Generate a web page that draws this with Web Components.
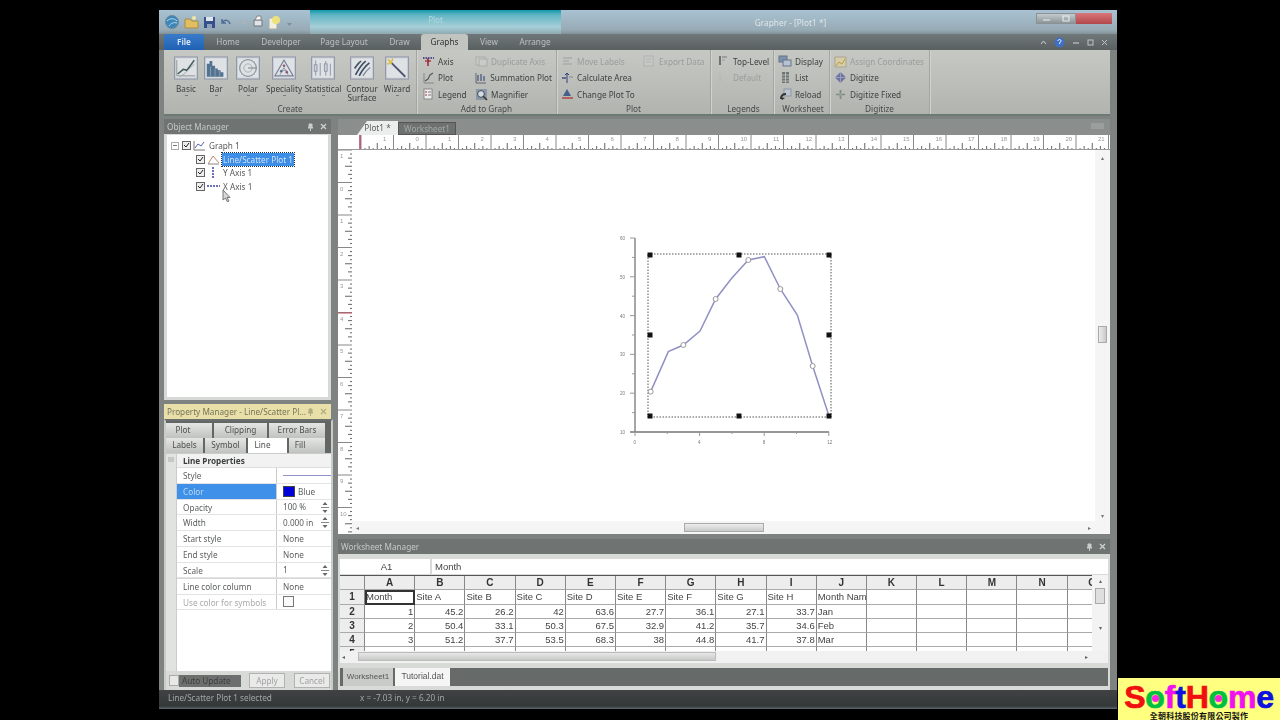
<!DOCTYPE html>
<html>
<head>
<meta charset="utf-8">
<title>Grapher</title>
<style>
html, body { margin: 0; height: 720px; overflow: hidden; background: #000; }
body { position: relative; font: 9px "Noto Sans", "Liberation Sans", sans-serif; }
</style>
</head>
<body>
<gr-window>
	<gr-titlebar slot="title"></gr-titlebar>
	<gr-ribbon slot="ribbon"></gr-ribbon>
	<gr-panel slot="tree" heading="Object Manager"><gr-tree></gr-tree></gr-panel>
	<gr-panel slot="props" heading="Property Manager - Line/Scatter Pl..." tone="yellow"><gr-props></gr-props></gr-panel>
	<gr-plot slot="plot"></gr-plot>
	<gr-panel slot="sheet" heading="Worksheet Manager"><gr-sheet></gr-sheet></gr-panel>
	<gr-status slot="status"></gr-status>
</gr-window>
<gr-logo></gr-logo>

<script>
const define = (name, markup, init) => {
	const tpl = document.createElement('template')
	tpl.innerHTML = markup
	customElements.define(name, class extends HTMLElement {
		constructor() {
			super()
			this.attachShadow({mode: 'open'}).append(tpl.content.cloneNode(true))
		}
		connectedCallback() {
			if (init) init(this, this.shadowRoot)
		}
	})
}

const svg = (w, h, body) => `<svg width="${w}" height="${h}" viewBox="0 0 ${w} ${h}" fill="none">${body}</svg>`

const bigFrame = inner => `<svg width="24" height="24" viewBox="0 0 26 25" fill="none"><rect x=".5" y=".5" width="25" height="24" fill="#c4c9d2" stroke="#8f95a6"/><rect x="2" y="2" width="22" height="21" fill="#dfe2e4"/>${inner}</svg>`
const bigIcons = {
	basic: bigFrame('<path d="M3 21h20M3 4v17" stroke="#8c908e"/><path d="M4 19l6-5 4 1 8-11" stroke="#3f5a58" stroke-width="1.6"/><path d="M6 22l5-3 5-5 6-6" stroke="#9aa7b4"/>'),
	bar: bigFrame('<path d="M3 22V8h3v-3h3v5h3v3h3v2h3v2h3v5z" fill="#52728f"/><path d="M7 22V11M12 22V13M17 22v-6" stroke="#88a0b4"/>'),
	polar: bigFrame('<circle cx="13" cy="12.5" r="9" stroke="#8e9aa0" stroke-width="1.4"/><circle cx="13" cy="12.5" r="4.5" stroke="#a4adb1"/><path d="M13 12.5h9" stroke="#6f7c80"/>'),
	speciality: bigFrame('<path d="M13 4L23 21H3z" stroke="#7a7f95" stroke-width="1.2"/><path d="M8 21l5-9 5 9M10 15h6" stroke="#9498ac"/><circle cx="13" cy="10" r="1.4" fill="#8a5a72"/><circle cx="10" cy="16" r="1.4" fill="#5a6a8a"/><circle cx="16" cy="17" r="1.4" fill="#8a5a72"/>'),
	statistical: bigFrame('<path d="M5 4v17M10 7v14M16 5v16M21 8v13" stroke="#9ea3b6" stroke-width="1.3"/><rect x="3.5" y="9" width="3" height="7" fill="#ccd0d8" stroke="#8f94a6"/><rect x="14.5" y="8" width="3" height="8" fill="#ccd0d8" stroke="#8f94a6"/>'),
	contour: bigFrame('<path d="M6 20C9 14 12 9 17 5M10 21c3-6 6-10 11-14M5 13c2-3 4-6 7-8" stroke="#3f4f63" stroke-width="1.8"/><path d="M14 21c2-3 5-7 8-9" stroke="#7b86a0" stroke-width="1.4"/>'),
	wizard: bigFrame('<path d="M7 7l15 15" stroke="#4d5670" stroke-width="2"/><path d="M3 3l2 2M8 2v3M2 8h3" stroke="#d8b53c" stroke-width="1.5"/><circle cx="6" cy="6" r="2" fill="#e2c040"/>')
}

const smallIcons = {
	axis: svg(13, 12, '<path d="M1 3h11" stroke="#2a2f80" stroke-width="1.4" stroke-dasharray="1.5 1"/><path d="M6 3v8" stroke="#a01f2f" stroke-width="1.5"/><path d="M3 6h6" stroke="#a01f2f" stroke-width="1.2"/>'),
	plot: svg(13, 12, '<path d="M2 1v10h10" stroke="#888"/><path d="M3 9l3-2 2-4 3-2" stroke="#555" stroke-width="1.1"/>'),
	legend: svg(13, 12, '<rect x="2" y="1" width="8" height="10" fill="#eee" stroke="#888"/><path d="M3 4h2M3 7h2" stroke="#a03333"/><path d="M6 4h3M6 7h3" stroke="#777"/>'),
	dup: svg(13, 12, '<rect x="1" y="2" width="9" height="8" fill="#c8cbc6" stroke="#a9aca8"/><rect x="4" y="4" width="8" height="7" fill="#c8cbc6" stroke="#a9aca8"/>'),
	sum: svg(13, 12, '<path d="M2 1v10h10" stroke="#667"/><path d="M4 9V3M7 9V2M10 9V4" stroke="#6a7590" stroke-width="1.8"/>'),
	mag: svg(13, 13, '<rect x="1" y="1" width="11" height="11" fill="#8a97a8"/><circle cx="6" cy="6" r="3.4" fill="#d6dade" stroke="#3e4a5a"/><path d="M8 8l4 4" stroke="#3e3628" stroke-width="1.6"/>'),
	move: svg(13, 12, '<path d="M2 3h9M2 6h6M2 9h9" stroke="#a9aca8" stroke-width="1.6"/>'),
	area: svg(13, 12, '<path d="M6 1v10" stroke="#2e3f80"/><path d="M1 6h4" stroke="#2e3f80" stroke-width="1.3"/><path d="M8 5h4" stroke="#8a8d8a"/><path d="M4 3l2-2 2 2" stroke="#2e3f80"/>'),
	change: svg(13, 12, '<path d="M6 1L2 8h8z" fill="#43608f"/><path d="M1 10h11" stroke="#b03c3c" stroke-width="1.4"/>'),
	export: svg(13, 12, '<rect x="1" y="1" width="9" height="10" fill="#c6c9c4" stroke="#aeb1ad"/><path d="M3 4h5M3 7h5" stroke="#aeb1ad"/>'),
	top: svg(13, 12, '<path d="M3 1v9" stroke="#444" stroke-width="1.3"/><path d="M5 2h5" stroke="#777"/><path d="M5 5h3" stroke="#999"/>'),
	def: svg(13, 12, '<path d="M3 2v8" stroke="#b4b7b3" stroke-width="1.3"/>'),
	display: svg(14, 12, '<rect x="1" y="1" width="8" height="6" fill="#7d93ad" stroke="#66758a"/><rect x="5" y="5" width="8" height="6" fill="#b5c2cf" stroke="#66758a"/>'),
	list: svg(13, 13, '<rect x="3" y="1" width="7" height="11" fill="#6f7674"/><path d="M3 4h7M3 7h7M3 10h7M6.500 1v11" stroke="#cfd2cf" stroke-width=".7"/>'),
	reload: svg(13, 13, '<rect x="5" y="1" width="7" height="7" fill="#bac3cf" stroke="#8d97a6"/><path d="M2 11c0-3 2-5 5-5" stroke="#333" stroke-width="1.8"/><path d="M1 9l2 3 3-2" fill="#333"/>'),
	assign: svg(13, 13, '<rect x="1" y="2" width="11" height="10" fill="#d4cda8" stroke="#aaa68c"/><path d="M2 11l3-4 3 2 3-5" stroke="#c09a3c"/>'),
	digitize: svg(13, 13, '<path d="M6.500 1l5.500 5.500-5.500 5.500L1 6.500z" fill="#6f739f"/><path d="M6.500 1v11M1 6.500h11" stroke="#a5a8c4" stroke-width=".8"/>'),
	fixed: svg(13, 13, '<path d="M6.500 2v9M2 6.500h9" stroke="#7f8a84" stroke-width="1.7"/><circle cx="6.500" cy="6.500" r="1.600" fill="#97a097"/>')
}

define('gr-window', `<style>
:host {
	display: grid;
	position: absolute;
	left: 159px;
	top: 10px;
	width: 958px;
	height: 699px;
	grid-template-columns: 5px 167px 7px 772px 7px;
	grid-template-rows: 40px 66px 3px 15px 266px 4px 286px 19px;
	background: #7e8281;
	filter: blur(.6px);
	color: #333;
}
::slotted([slot=title]) { grid-area: 1 / 1 / 2 / 6; }
::slotted([slot=ribbon]) { grid-area: 2 / 2 / 3 / 5; }
::slotted([slot=tree]) { grid-area: 4 / 2 / 6 / 3; }
::slotted([slot=props]) { grid-area: 7 / 2 / 8 / 3; }
#right {
	grid-area: 4 / 4 / 8 / 5;
	display: grid;
	grid-template-rows: 415px 5px 151px;
}
::slotted([slot=status]) { grid-area: 8 / 1 / 9 / 6; }
</style>
<slot name="title"></slot>
<slot name="ribbon"></slot>
<slot name="tree"></slot>
<slot name="props"></slot>
<div id="right"><slot name="plot"></slot><span></span><slot name="sheet"></slot></div>
<slot name="status"></slot>`)

define('gr-titlebar', `<style>
:host {
	display: grid;
	grid-template-rows: 24px 16px;
	background: linear-gradient(#a9c2d2, #97abb5 50%, #6a7375 72%, #5c6162);
	color: #d8dcdc;
	position: relative;
	overflow: hidden;
}
#top {
	display: flex;
	align-items: center;
	padding: 0 5px 0 5px;
}
#qat { display: flex; align-items: center; gap: 4px; width: 146px; }
#glare {
	width: 251px;
	height: 100%;
	box-sizing: border-box;
	text-align: center;
	line-height: 20px;
	font-size: 8px;
	color: #b9d8df;
	background: linear-gradient(#0f98ab, #5fb5c4 20%, #a6cfd8 70%, #8fa9b0);
}
#name {
	flex: 1;
	text-align: center;
	padding-right: 16px;
	font-size: 8.300px;
	color: #dfe6e8;
}
#winbtn { display: flex; height: 11px; position: relative; top: -4px; }
#minmax { width: 40px; background: linear-gradient(#c3cbd0, #8d9598); border: 1px solid #8b9296; box-sizing: border-box; display: flex; align-items: center; justify-content: space-around; }
#close { width: 36px; background: linear-gradient(#d8777a, #b2474b); }
#tabs {
	display: grid;
	grid-template-columns: 5px 40px 48px 58px 68px 43px 47px 42px 50px 1fr;
	align-items: stretch;
	font-size: 8.200px;
	text-align: center;
	line-height: 15px;
	background: linear-gradient(#70787a, #5a5f60);
}
#tabs span { color: #bcc0bf; }
#tabs .file { background: linear-gradient(#3a7bc9, #1f62b5); color: #dce8f5; border-radius: 3px 3px 0 0; font-weight: 600; }
#tabs .on { background: #c2c4bf; color: #2f3331; border-radius: 3px 3px 0 0; }
#help { display: flex; align-items: center; justify-content: flex-end; gap: 7px; padding-right: 9px; }
</style>
<div id="top">
	<div id="qat">
		<svg width="16" height="16" viewBox="0 0 16 16"><circle cx="8" cy="8" r="6.500" fill="#3e86b8" stroke="#6a8aa0"/><path d="M3 7c3-3 7-3 10 0M5 12c2-3 5-4 8-3" stroke="#b4dcee" fill="none"/></svg>
		<svg width="15" height="14" viewBox="0 0 15 14"><path d="M1 4h5l2 2h6v7H1z" fill="#e2be60" stroke="#a88d4a"/><circle cx="10" cy="3" r="2" fill="#f3e7a6"/></svg>
		<svg width="13" height="13" viewBox="0 0 13 13"><rect x="1" y="1" width="11" height="11" fill="#35508a"/><rect x="3" y="1" width="7" height="4" fill="#dfe5ee"/><rect x="4" y="8" width="5" height="4" fill="#8fa0bc"/></svg>
		<svg width="12" height="12" viewBox="0 0 12 12"><path d="M3 6c2-3 6-2 7 2M2 3v4h4" stroke="#4e6e96" stroke-width="1.500" fill="none"/></svg>
		<svg width="12" height="12" viewBox="0 0 12 12"><path d="M9 6C7 3 3 4 2 8M10 3v4H6" stroke="#a8b4bc" stroke-width="1.300" fill="none"/></svg>
		<svg width="12" height="14" viewBox="0 0 12 14"><path d="M2 5h8v6H2z" fill="#e1e4e6" stroke="#6f7478"/><path d="M3 5l2-4h4v4z" fill="#f5f5f5" stroke="#888"/></svg>
		<svg width="14" height="15" viewBox="0 0 14 15"><rect x="1" y="3" width="8" height="11" fill="#f0efe0" stroke="#aaa"/><circle cx="8" cy="5" r="4" fill="#ece27c"/></svg>
		<svg width="7" height="8" viewBox="0 0 7 8"><path d="M1 5h5L3.500 8z" fill="#7f8d95"/></svg>
	</div>
	<div id="glare">Plot</div>
	<div id="name">Grapher - [Plot1 *]</div>
	<div id="winbtn">
		<div id="minmax"><svg width="8" height="6"><path d="M0 5h7" stroke="#eee"/></svg><svg width="8" height="7"><rect x="1" y="1" width="6" height="5" fill="none" stroke="#eee"/></svg></div>
		<div id="close"></div>
	</div>
</div>
<div id="tabs">
	<i></i>
	<span class="file">File</span><span>Home</span><span>Developer</span><span>Page Layout</span><span>Draw</span><span class="on">Graphs</span><span>View</span><span>Arrange</span>
	<div id="help">
		<svg width="7" height="5"><path d="M1 4l2.500-3L6 4" stroke="#d0d4d4" fill="none"/></svg>
		<svg width="11" height="11"><circle cx="5.500" cy="5.500" r="5" fill="#3f70c4"/><path d="M4 4c0-2 3-2 3 0 0 1-1.500 1-1.500 3" stroke="#fff" fill="none"/></svg>
		<svg width="8" height="6"><path d="M1 4h6" stroke="#d0d4d4"/></svg>
		<svg width="7" height="7"><rect x="1" y="1" width="5" height="5" fill="none" stroke="#bfc4c4"/></svg>
		<svg width="7" height="7"><path d="M1 1l5 5M6 1l-5 5" stroke="#bfc4c4"/></svg>
	</div>
</div>`)

define('gr-group', `<style>
:host {
	display: grid;
	grid-template-rows: 1fr 10px;
	border-right: 1px solid #a3a6a1;
	box-shadow: 1px 0 0 #d0d2cd;
	box-sizing: border-box;
	color: #3c403e;
}
#body { display: flex; padding-top: 3px; min-height: 0; }
#label { text-align: center; font-size: 8.200px; line-height: 10px; color: #464a48; }
</style>
<div id="body"><slot></slot></div>
<div id="label"></div>`, (el, root) => {
	root.getElementById('label').textContent = el.getAttribute('label')
	el.style.width = el.getAttribute('w') + 'px'
})

define('gr-big', `<style>
:host { display: flex; flex-direction: column; align-items: center; font-size: 8.200px; line-height: 9px; text-align: center; flex: none; margin-top: 3px; }
#ico { height: 24px; margin-bottom: 4px; }
#txt { white-space: pre-line; }
#more { width: 3px; height: 1px; background: #7a7d7a; margin: 2px auto 0; }
</style>
<div id="ico"></div><div id="txt"></div><div id="more"></div>`, (el, root) => {
	root.getElementById('ico').innerHTML = bigIcons[el.getAttribute('icon')]
	root.getElementById('txt').textContent = el.getAttribute('label').replace('|', '\n')
	el.style.width = el.getAttribute('w') + 'px'
})

define('gr-small', `<style>
:host { display: flex; align-items: center; gap: 3px; height: 16.500px; font-size: 8.200px; white-space: nowrap; }
:host([off]) { color: #9a9d99; }
#ico { width: 14px; height: 13px; display: flex; align-items: center; justify-content: center; }
</style>
<div id="ico"></div><slot></slot>`, (el, root) => {
	root.getElementById('ico').innerHTML = smallIcons[el.getAttribute('icon')]
})

define('gr-col', `<style>
:host { display: flex; flex-direction: column; flex: none; }
</style><slot></slot>`, el => {
	el.style.width = el.getAttribute('w') + 'px'
})

define('gr-ribbon', `<style>
:host {
	display: flex;
	background: linear-gradient(#c6c8c4, #b8bab6 70%, #b0b3ae);
	border-bottom: 2px solid #6b7a72;
	box-sizing: border-box;
}
</style>
<gr-group label="Create" w="253">
	<gr-big icon="basic" label="Basic" w="30" style="margin-left:7px"></gr-big>
	<gr-big icon="bar" label="Bar" w="30"></gr-big>
	<gr-big icon="polar" label="Polar" w="34"></gr-big>
	<gr-big icon="speciality" label="Speciality" w="38"></gr-big>
	<gr-big icon="statistical" label="Statistical" w="40"></gr-big>
	<gr-big icon="contour" label="Contour|Surface" w="38"></gr-big>
	<gr-big icon="wizard" label="Wizard" w="32"></gr-big>
</gr-group>
<gr-group label="Add to Graph" w="140">
	<gr-col w="53" style="padding-left:4px">
		<gr-small icon="axis">Axis</gr-small>
		<gr-small icon="plot">Plot</gr-small>
		<gr-small icon="legend">Legend</gr-small>
	</gr-col>
	<gr-col w="78">
		<gr-small icon="dup" off>Duplicate Axis</gr-small>
		<gr-small icon="sum">Summation Plot</gr-small>
		<gr-small icon="mag">Magnifier</gr-small>
	</gr-col>
</gr-group>
<gr-group label="Plot" w="154">
	<gr-col w="83" style="padding-left:3px">
		<gr-small icon="move" off>Move Labels</gr-small>
		<gr-small icon="area">Calculate Area</gr-small>
		<gr-small icon="change">Change Plot To</gr-small>
	</gr-col>
	<gr-col w="60">
		<gr-small icon="export" off>Export Data</gr-small>
	</gr-col>
</gr-group>
<gr-group label="Legends" w="63">
	<gr-col w="60" style="padding-left:5px">
		<gr-small icon="top">Top-Level</gr-small>
		<gr-small icon="def" off>Default</gr-small>
	</gr-col>
</gr-group>
<gr-group label="Worksheet" w="56">
	<gr-col w="54" style="padding-left:4px">
		<gr-small icon="display">Display</gr-small>
		<gr-small icon="list">List</gr-small>
		<gr-small icon="reload">Reload</gr-small>
	</gr-col>
</gr-group>
<gr-group label="Digitize" w="100">
	<gr-col w="96" style="padding-left:3px">
		<gr-small icon="assign" off>Assign Coordinates</gr-small>
		<gr-small icon="digitize">Digitize</gr-small>
		<gr-small icon="fixed">Digitize Fixed</gr-small>
	</gr-col>
</gr-group>`)

define('gr-panel', `<style>
:host { display: grid; grid-template-rows: 15px 1fr; min-height: 0; min-width: 0; }
#head {
	display: flex;
	align-items: center;
	padding: 0 4px 0 3px;
	font-size: 8.200px;
	color: #c4c8c7;
	background: #6f7473;
	overflow: hidden;
}
:host([tone=yellow]) #head { background: #e8e0a8; color: #77745a; }
#name { flex: 1; white-space: nowrap; overflow: hidden; }
#btns { display: flex; gap: 6px; align-items: center; }
#body { min-height: 0; min-width: 0; display: grid; }
</style>
<div id="head"><span id="name"></span>
	<span id="btns">
		<svg width="7" height="8"><path d="M2 1h3v3l1 1H1l1-1zM3.500 5v3" stroke="#c9cdcc" fill="#c9cdcc"/></svg>
		<svg width="7" height="7"><path d="M1 1l5 5M6 1l-5 5" stroke="#d0d4d3" stroke-width="1.200"/></svg>
	</span>
</div>
<div id="body"><slot></slot></div>`, (el, root) => {
	root.getElementById('name').textContent = el.getAttribute('heading')
	if (el.getAttribute('tone') === 'yellow') root.querySelectorAll('#btns path').forEach(p => {
		p.setAttribute('stroke', '#b0ac84')
		if (p.getAttribute('fill') !== null) p.setAttribute('fill', '#b0ac84')
	})
})

define('gr-tree', `<style>
:host {
	display: block;
	background: #fff;
	border: 3px solid #d7d9d7;
	border-top-width: 1px;
	font-size: 8.200px;
	color: #575a59;
	position: relative;
	padding: 4px 0 0 4px;
}
.row { display: flex; align-items: center; height: 13.500px; gap: 2px; }
.row.sub { padding-left: 25px; }
.box { width: 7px; height: 7px; border: 1px solid #666; flex: none; display: flex; align-items: center; justify-content: center; background: #eee; }
.exp { width: 6px; height: 6px; border: 1px solid #aaa; margin-right: 1px; position: relative; }
.exp::after { content: ""; position: absolute; left: 1px; right: 1px; top: 2.500px; height: 1px; background: #777; }
.sel { background: #3d8ee6; color: #cfe0f6; padding: 1px 1px; outline: 1px dotted #234; }
.txt { padding: 1px 1px; }
#cursor { position: absolute; left: 55px; top: 54px; }
</style>
<div class="row">
	<span class="exp"></span>
	<span class="box"><svg width="7" height="7"><path d="M1 3l2 2 3-4" stroke="#222" fill="none"/></svg></span>
	<svg width="13" height="11"><path d="M1 1v9h11" stroke="#777" fill="none"/><path d="M2 8l3-4 3 2 3-4" stroke="#5268a8" fill="none"/></svg>
	<span class="txt">Graph 1</span>
</div>
<div class="row sub">
	<span class="box"><svg width="7" height="7"><path d="M1 3l2 2 3-4" stroke="#222" fill="none"/></svg></span>
	<svg width="13" height="11"><path d="M1 10l5-8 6 7" stroke="#b88a70" fill="none"/><path d="M1 10h11" stroke="#888"/></svg>
	<span class="sel">Line/Scatter Plot 1</span>
</div>
<div class="row sub">
	<span class="box"><svg width="7" height="7"><path d="M1 3l2 2 3-4" stroke="#222" fill="none"/></svg></span>
	<svg width="13" height="11"><path d="M6 0v11" stroke="#3a44a0" stroke-dasharray="2 1" stroke-width="1.500"/></svg>
	<span class="txt">Y Axis 1</span>
</div>
<div class="row sub">
	<span class="box"><svg width="7" height="7"><path d="M1 3l2 2 3-4" stroke="#222" fill="none"/></svg></span>
	<svg width="13" height="11"><path d="M0 5h13" stroke="#3a44a0" stroke-dasharray="2 1" stroke-width="1.500"/></svg>
	<span class="txt">X Axis 1</span>
</div>
<svg id="cursor" width="9" height="13"><path d="M1 1v10l2.500-2 2 4 1.500-1-2-3.500H8z" fill="#d8d8d8" stroke="#777"/></svg>`)

const PROP_ROWS = [
	['Style', '<span class="ln"></span>'],
	['Color', '<span class="sw"></span>Blue', 'on'],
	['Opacity', '100 %', 'updown'],
	['Width', '0.000 in', 'updown'],
	['Start style', 'None'],
	['End style', 'None'],
	['Scale', '1', 'updown'],
	null,
	['Line color column', 'None'],
	['Use color for symbols', '<span class="ck"></span>', 'dim']
]

const SPIN = '<svg class="spin" width="10" height="13"><path d="M5 1L2.500 4h5zM5 12L2.500 9h5z" fill="#666"/><path d="M1 6.500h8" stroke="#888"/></svg>'

define('gr-props', `<style>
:host {
	display: grid;
	grid-template-rows: 32px 1fr 19px;
	background: #d9dbd9;
	border: 2px solid #c8cbc8;
	border-top: 2px solid #6a6f6e;
	border-width: 2px 2px 0 2px;
	font-size: 8.200px;
	color: #5c5f5e;
	min-height: 0;
}
#tabs { display: grid; grid-template-rows: 15px 15px; background: #626766; padding-top: 2px; }
.tabrow { display: flex; gap: 2px; text-align: center; line-height: 14px; }
.tabrow span { background: linear-gradient(#e5e6e4, #bfc2bf); color: #4c4f4d; box-sizing: border-box; }
.tabrow .on { background: #fff; }
#grid { background: #fff; border-top: 1px solid #ccc; display: grid; grid-template-columns: 11px 1fr; min-height: 0; }
#gut { background: #e1e3e1; border-right: 1px solid #ccc; position: relative; }
#gut i { position: absolute; left: 2px; top: 3px; width: 6px; height: 5px; background: #c6c8c6; }
#sect { font-weight: 700; color: #3c3f3e; height: 14px; line-height: 14px; padding-left: 6px; background: #f1f2f1; border-bottom: 1px solid #ddd; box-sizing: border-box; }
.r { display: grid; grid-template-columns: 100px 1fr; height: 15.750px; line-height: 15px; border-bottom: 1px solid #e2e3e2; box-sizing: border-box; }
.r b { font-weight: 400; padding-left: 6px; border-right: 1px solid #c9cbc9; white-space: nowrap; overflow: hidden; }
.r em { font-style: normal; padding-left: 6px; display: flex; align-items: center; gap: 3px; white-space: nowrap; overflow: hidden; position: relative; }
.r.on b { background: #3f90e8; color: #bcd8f4; }
.r.dim b { color: #a8a9a8; }
.gap { height: .500px; background: #d6d7d6; }
.ln { display: block; width: 100%; height: 1px; background: #8f92c8; }
.sw { width: 12px; height: 11px; background: #0000d8; border: 1px solid #444; box-sizing: border-box; flex: none; }
.ck { width: 9px; height: 9px; border: 1px solid #777; background: #fafafa; }
.spin { position: absolute; right: 1px; top: 1px; background: #fff; }
#foot { display: flex; align-items: center; background: #d8dad8; padding: 0 1px 0 3px; }
#chk { width: 8px; height: 9px; border: 1px solid #a9aca9; background: #e8e8e8; flex: none; }
#auto { background: #6b6f6e; color: #3c3f3e; width: 62px; height: 12px; line-height: 12px; padding-left: 3px; box-sizing: border-box; margin-right: 8px; }
.btn { height: 15px; line-height: 13px; box-sizing: border-box; border: 1px solid #b0b2b0; background: #e9eae9; color: #a0a2a0; text-align: center; }
</style>
<div id="tabs">
	<div class="tabrow"><span style="width:46px;padding-right:12px">Plot</span><span style="width:53px">Clipping</span><span style="width:56px">Error Bars</span></div>
	<div class="tabrow"><span style="width:37px">Labels</span><span style="width:41px">Symbol</span><span class="on" style="width:39px;padding-right:10px">Line</span><span style="width:36px;padding-right:14px">Fill</span></div>
</div>
<div id="grid">
	<div id="gut"><i></i></div>
	<div><div id="sect">Line Properties</div><div id="rows"></div></div>
</div>
<div id="foot">
	<span id="chk"></span><span id="auto">Auto Update</span>
	<span class="btn" style="width:36px;margin-right:9px">Apply</span>
	<span class="btn" style="width:36px">Cancel</span>
</div>`, (el, root) => {
	root.getElementById('rows').innerHTML = PROP_ROWS.map(r => !r
		? '<div class="gap"></div>'
		: `<div class="r ${r[2] || ''}"><b>${r[0]}</b><em>${r[1]}${r[2] === 'updown' ? SPIN : ''}</em></div>`).join('')
})

define('gr-ruler', `<style>
:host { display: block; background: #fff; overflow: hidden; }
svg { display: block; }
text { font: 6px "Liberation Sans", sans-serif; fill: #999; }
</style><div id="r"></div>`, (el, root) => {
	const vert = el.hasAttribute('vertical')
	const len = +el.getAttribute('len')
	const depth = vert ? 14 : 15
	const start = +el.getAttribute('start')
	let out = ''
	const step = 32.5 / 8
	let i = 0
	for (let p = start; p < len; p += step, i++) {
		const h = i % 8 === 0 ? depth : i % 4 === 0 ? 7 : i % 2 === 0 ? 4 : 2
		const col = i % 8 === 0 ? '#888' : '#666'
		out += vert
			? `<path d="M${depth} ${p}h-${h}" stroke="${col}"/>`
			: `<path d="M${p} ${depth}v-${h}" stroke="${col}"/>`
		if (i % 8 === 0) {
			const n = Math.abs(i / 8 - 1)
			out += vert
				? `<text x="2" y="${p + 8}">${n}</text>`
				: `<text x="${p + 22}" y="6">${n}</text>`
		}
	}
	const mark = +el.getAttribute('mark')
	out += vert
		? `<path d="M0 ${mark}h${depth}" stroke="#c0485a"/>`
		: `<path d="M${mark} 0v${depth}" stroke="#b04060" stroke-width="1.500"/>`
	const w = vert ? depth : len, h = vert ? len : depth
	root.getElementById('r').innerHTML = `<svg width="${w}" height="${h}">${out}</svg>`
})

const POINTS = [[152,500],[205,380],[250,360],[300,318],[347,222],[395,160],[445,105],[493,95],[541,192],[592,270],[638,423],[686,570]]
	.map(([x, y]) => [600 + x / 3, 225 + y / 3])

define('gr-chart', `<style>
:host { display: block; width: 235px; height: 225px; margin: 80px 0 0 258px; }
svg { display: block; }
text { font: 4.500px "Liberation Sans", sans-serif; fill: #777; }
</style><div id="c"></div>`, (el, root) => {
	let s = '<path d="M635 238v194M630 432h199" stroke="#777" stroke-width="1.300"/>'
	;[60, 50, 40, 30, 20, 10].forEach((n, i) => {
		const y = 238 + i * 38.800
		s += `<text x="620" y="${y + 2}">${n}</text><path d="M630 ${y}h5" stroke="#999"/>`
		if (i < 5) s += `<path d="M632 ${y + 19.400}h3" stroke="#999"/>`
	})
	;[0, 1, 2, 3, 4, 5, 6].forEach(i => {
		const x = 635 + i * 32.300
		s += `<path d="M${x} 432v${i % 2 ? 2 : 4}" stroke="#999"/>`
		if (i % 2 === 0) s += `<text x="${x - 1.500}" y="444">${i * 2}</text>`
	})
	s += '<rect x="648" y="254" width="183" height="163" stroke="#555" stroke-dasharray="1.500 1.500"/>'
	s += `<polyline points="${POINTS.map(p => p.join(',')).join(' ')}" stroke="#9090c4" stroke-width="1.500"/>`
	POINTS.forEach((p, i) => {
		if (i % 2 === 0 && i < 11) s += `<circle cx="${p[0]}" cy="${p[1]}" r="2.500" fill="#fff" stroke="#999"/>`
	})
	;[650, 739, 829].forEach(x => [255, 335, 416].forEach(y => {
		if (x === 739 && y === 335) return
		s += `<rect x="${x - 2.500}" y="${y - 2.500}" width="5" height="5" fill="#111"/>`
	}))
	root.getElementById('c').innerHTML = `<svg width="235" height="225" viewBox="610 230 235 225" fill="none">${s}</svg>`
})

define('gr-plot', `<style>
:host { display: grid; grid-template-rows: 16px 15px 1fr; min-height: 0; background: #7f8382; }
#tabs { display: flex; align-items: flex-end; padding-left: 19px; background: #8a8e8c; font-size: 8.200px; line-height: 13px; text-align: center; position: relative; }
#t1 { width: 41px; height: 14px; background: #eceded; color: #5b5e5d; clip-path: polygon(10px 0, 100% 0, 100% 100%, 0 100%); }
#t2 { width: 58px; height: 13px; background: #6d7170; color: #a5a8a7; border: 1px solid #555; box-sizing: border-box; line-height: 11px; }
#pin { position: absolute; right: 6px; top: 4px; width: 13px; height: 6px; background: #9a9e9c; }
#rrow { display: grid; grid-template-columns: 14px 1fr; background: #fff; border-bottom: 1px solid #9a9a9a; box-sizing: border-box; }
#body { display: grid; grid-template-columns: 14px 1fr 15px; grid-template-rows: 1fr; min-height: 0; }
#canvas { background: #fff; min-width: 0; min-height: 0; display: grid; grid-template-rows: 1fr 13px; }
#vbar, #hbar { background: #f4f5f4; position: relative; display: flex; }
#hbar { align-items: center; justify-content: space-between; padding: 0 4px; font-size: 6px; color: #777; }
#vbar { flex-direction: column; align-items: center; justify-content: space-between; padding: 4px 0 14px; font-size: 6px; color: #777; }
#hthumb { position: absolute; left: 332px; top: 2px; width: 80px; height: 9px; background: linear-gradient(#ececec, #c9cbc9); border: 1px solid #aaa; box-sizing: border-box; }
#vthumb { position: absolute; left: 3px; top: 176px; width: 9px; height: 17px; background: linear-gradient(90deg, #ececec, #c9cbc9); border: 1px solid #aaa; box-sizing: border-box; }
</style>
<div id="tabs"><div id="t1">Plot1 *</div><div id="t2">Worksheet1</div><div id="pin"></div></div>
<div id="rrow"><span></span><gr-ruler len="758" start="9" mark="8"></gr-ruler></div>
<div id="body">
	<gr-ruler vertical len="383" start="0" mark="163"></gr-ruler>
	<div id="canvas">
		<div style="min-height:0;overflow:hidden"><gr-chart></gr-chart></div>
		<div id="hbar"><span>&#9666;</span><div id="hthumb"></div><span>&#9656;</span></div>
	</div>
	<div id="vbar"><span>&#9652;</span><div id="vthumb"></div><span>&#9662;</span></div>
</div>`)

const COLS = 'ABCDEFGHIJKLMNO'.split('')
const SHEET = [
	['Month', 'Site A', 'Site B', 'Site C', 'Site D', 'Site E', 'Site F', 'Site G', 'Site H', 'Month Name'],
	[1, 45.2, 26.2, 42, 63.6, 27.7, 36.1, 27.1, 33.7, 'Jan'],
	[2, 50.4, 33.1, 50.3, 67.5, 32.9, 41.2, 35.7, 34.6, 'Feb'],
	[3, 51.2, 37.7, 53.5, 68.3, 38, 44.8, 41.7, 37.8, 'Mar'],
	[4, 53.6, 47.5, 58.4, 74.1, 45.5, 51.5, 50.7, 46.5, 'Apr']
]

define('gr-sheet', `<style>
:host {
	display: grid;
	grid-template-rows: 5px 15px 1px 76px 12px 5px 18px 1fr;
	background: #d8dad8;
	border: 2px solid #d8dad8;
	border-width: 0 2px 0 2px;
	font: 9.500px "Liberation Sans", sans-serif;
	color: #444;
	min-height: 0;
}
#fx { grid-row: 2; display: grid; grid-template-columns: 90px 1fr; gap: 2px; }
#fx div { background: #fff; line-height: 15px; padding-left: 3px; }
#fx div:first-child { text-align: center; }
#wrap { grid-row: 4; display: grid; grid-template-columns: 1fr 16px; background: #fff; overflow: hidden; min-height: 0; }
#grid { display: grid; grid-template-columns: 25px repeat(15, 50.200px); grid-auto-rows: 14.300px; overflow: hidden; border-top: 1px solid #555; }
#grid span { box-sizing: border-box; border-right: 1px solid #888; border-bottom: 1px solid #aaa; line-height: 13px; padding: 0 1px; white-space: nowrap; overflow: hidden; }
#grid .h { background: #ecedec; font-weight: 700; color: #333; text-align: center; font-size: 10px; }
#grid .n { text-align: right; }
#grid .a { outline: 2px solid #333; outline-offset: -2px; }
#side { background: #f2f3f2; display: flex; flex-direction: column; align-items: center; font-size: 6px; color: #666; justify-content: space-between; padding: 2px 0 20px; position: relative; }
#side i { position: absolute; left: 3px; top: 13px; width: 8px; height: 14px; border: 1px solid #aaa; background: #dedfde; }
#hs { grid-row: 5; background: #f0f1f0; position: relative; font-size: 6px; color: #666; display: flex; justify-content: space-between; padding: 0 20px 0 2px; line-height: 12px; }
#hs i { position: absolute; left: 18px; top: 1px; width: 358px; height: 9px; background: linear-gradient(#e7e8e7, #c7c9c7); border: 1px solid #bbb; box-sizing: border-box; }
#book { grid-row: 7; display: flex; background: #666a69; font-size: 8.500px; text-align: center; line-height: 17px; padding-left: 3px; gap: 2px; }
#book span:first-child { width: 50px; background: #c9cbc9; color: #555; font-size: 8px; }
#book span:last-child { width: 55px; background: #f4f5f4; color: #555; }
</style>
<div id="fx"><div>A1</div><div>Month</div></div>
<div id="wrap"><div id="grid"></div><div id="side"><span>&#9652;</span><i></i><span>&#9662;</span></div></div>
<div id="hs"><span>&#9666;</span><i></i><span>&#9656;</span></div>
<div id="book"><span>Worksheet1</span><span>Tutorial.dat</span></div>`, (el, root) => {
	let out = '<span class="h"></span>' + COLS.map(c => `<span class="h">${c}</span>`).join('')
	SHEET.forEach((row, r) => {
		out += `<span class="h">${r + 1}</span>`
		COLS.forEach((c, i) => {
			const v = row[i] === undefined ? '' : row[i]
			const cls = (typeof v === 'number' ? 'n ' : '') + (r === 0 && i === 0 ? 'a' : '')
			out += `<span class="${cls}">${v}</span>`
		})
	})
	root.getElementById('grid').innerHTML = out
})

define('gr-status', `<style>
:host {
	display: grid;
	grid-template-columns: 192px 1fr;
	align-items: center;
	background: linear-gradient(#3f4343, #353838 85%, #5e6a72);
	color: #a2a6a5;
	font-size: 8.200px;
	padding-left: 9px;
	padding-bottom: 5px;
	box-sizing: border-box;
}
</style>
<span>Line/Scatter Plot 1 selected</span><span>x = -7.03 in, y = 6.20 in</span>`)

define('gr-logo', `<style>
:host {
	position: absolute;
	left: 1118px;
	top: 678px;
	width: 162px;
	height: 42px;
	background: #ffff80;
	display: flex;
	flex-direction: column;
	align-items: center;
	overflow: hidden;
}
#word { font: 700 32px/30px "Liberation Sans", sans-serif; -webkit-text-stroke: .7px currentColor; letter-spacing: -.2px; white-space: nowrap; margin-top: 4px; }
.o { position: relative; color: #00c040; }
.o::after { content: ""; position: absolute; left: 50%; top: 55%; width: 7px; height: 7px; margin: -3.500px; border-radius: 50%; background: #ff20e0; }
#sub { font: 700 8px/9px "Noto Sans CJK TC", sans-serif; color: #111; letter-spacing: .2px; margin-top: -1px; }
</style>
<div id="word"><span style="color:#f01010">S</span><span class="o">o</span><span style="color:#f010f0">f</span><span style="color:#1010e0">t</span><span style="color:#f01010">H</span><span class="o">o</span><span style="color:#f010f0">m</span><span style="color:#1010e0">e</span></div>
<div id="sub">全朝科技股份有限公司製作</div>`)
</script>
</body>
</html>
